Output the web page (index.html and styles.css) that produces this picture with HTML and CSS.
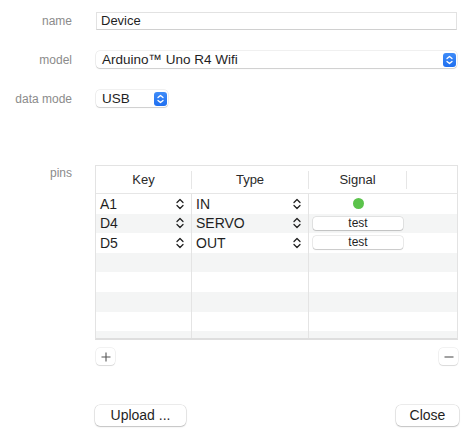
FILE: index.html
```html
<!DOCTYPE html>
<html>
<head>
<meta charset="utf-8">
<link rel="stylesheet" href="styles.css">
</head>
<body>
<div class="window">
  <div class="row row-name">
    <div class="label">name</div>
    <div class="field">Device</div>
  </div>
  <div class="row row-model">
    <div class="label">model</div>
    <div class="popup popup-wide">
      <span class="popup-text">Arduino™ Uno R4 Wifi</span>
      <span class="stepper"><svg width="7" height="10" viewBox="0 0 7 10"><path d="M1 3.6 L3.5 1.4 L6 3.6 M1 6.4 L3.5 8.6 L6 6.4" fill="none" stroke="#fff" stroke-width="1.3" stroke-linecap="round" stroke-linejoin="round"/></svg></span>
    </div>
  </div>
  <div class="row row-mode">
    <div class="label">data mode</div>
    <div class="popup popup-small">
      <span class="popup-text">USB</span>
      <span class="stepper"><svg width="7" height="10" viewBox="0 0 7 10"><path d="M1 3.6 L3.5 1.4 L6 3.6 M1 6.4 L3.5 8.6 L6 6.4" fill="none" stroke="#fff" stroke-width="1.3" stroke-linecap="round" stroke-linejoin="round"/></svg></span>
    </div>
  </div>
  <div class="row row-pins">
    <div class="label label-pins">pins</div>
    <div class="pins">
      <div class="table">
        <div class="thead">
          <div class="th c-key">Key</div>
          <div class="th c-type">Type</div>
          <div class="th c-signal">Signal</div>
          <div class="th c-extra"></div>
        </div>
        <div class="tbody">
          <div class="tr">
            <div class="td c-key"><span>A1</span><svg class="chev" width="8" height="12" viewBox="0 0 8 12"><path d="M1 4.5 L4 1.5 L7 4.5 M1 7.5 L4 10.5 L7 7.5" fill="none" stroke="#222" stroke-width="1.3" stroke-linecap="round" stroke-linejoin="round"/></svg></div>
            <div class="td c-type"><span>IN</span><svg class="chev" width="8" height="12" viewBox="0 0 8 12"><path d="M1 4.5 L4 1.5 L7 4.5 M1 7.5 L4 10.5 L7 7.5" fill="none" stroke="#222" stroke-width="1.3" stroke-linecap="round" stroke-linejoin="round"/></svg></div>
            <div class="td c-signal"><span class="dot"></span></div>
            <div class="td c-extra"></div>
          </div>
          <div class="tr alt">
            <div class="td c-key"><span>D4</span><svg class="chev" width="8" height="12" viewBox="0 0 8 12"><path d="M1 4.5 L4 1.5 L7 4.5 M1 7.5 L4 10.5 L7 7.5" fill="none" stroke="#222" stroke-width="1.3" stroke-linecap="round" stroke-linejoin="round"/></svg></div>
            <div class="td c-type"><span>SERVO</span><svg class="chev" width="8" height="12" viewBox="0 0 8 12"><path d="M1 4.5 L4 1.5 L7 4.5 M1 7.5 L4 10.5 L7 7.5" fill="none" stroke="#222" stroke-width="1.3" stroke-linecap="round" stroke-linejoin="round"/></svg></div>
            <div class="td c-signal"><span class="test">test</span></div>
            <div class="td c-extra"></div>
          </div>
          <div class="tr">
            <div class="td c-key"><span>D5</span><svg class="chev" width="8" height="12" viewBox="0 0 8 12"><path d="M1 4.5 L4 1.5 L7 4.5 M1 7.5 L4 10.5 L7 7.5" fill="none" stroke="#222" stroke-width="1.3" stroke-linecap="round" stroke-linejoin="round"/></svg></div>
            <div class="td c-type"><span>OUT</span><svg class="chev" width="8" height="12" viewBox="0 0 8 12"><path d="M1 4.5 L4 1.5 L7 4.5 M1 7.5 L4 10.5 L7 7.5" fill="none" stroke="#222" stroke-width="1.3" stroke-linecap="round" stroke-linejoin="round"/></svg></div>
            <div class="td c-signal"><span class="test">test</span></div>
            <div class="td c-extra"></div>
          </div>
          <div class="tr alt"><div class="td c-key"></div><div class="td c-type"></div><div class="td c-signal"></div><div class="td c-extra"></div></div>
          <div class="tr"><div class="td c-key"></div><div class="td c-type"></div><div class="td c-signal"></div><div class="td c-extra"></div></div>
          <div class="tr alt"><div class="td c-key"></div><div class="td c-type"></div><div class="td c-signal"></div><div class="td c-extra"></div></div>
          <div class="tr"><div class="td c-key"></div><div class="td c-type"></div><div class="td c-signal"></div><div class="td c-extra"></div></div>
          <div class="tr alt"><div class="td c-key"></div><div class="td c-type"></div><div class="td c-signal"></div><div class="td c-extra"></div></div>
        </div>
      </div>
      <div class="pm">
        <div class="sqbtn"><svg width="10" height="10" viewBox="0 0 10 10"><path d="M5 0.5 V9.5 M0.5 5 H9.5" stroke="#555" stroke-width="1.1"/></svg></div>
        <div class="sqbtn"><svg width="10" height="10" viewBox="0 0 10 10"><path d="M0.5 5 H9.5" stroke="#555" stroke-width="1.1"/></svg></div>
      </div>
    </div>
  </div>
  <div class="footer">
    <div class="btn btn-upload">Upload ...</div>
    <div class="btn btn-close">Close</div>
  </div>
</div>
</body>
</html>
```

FILE: styles.css
```css
html, body {
  margin: 0;
  padding: 0;
  background: #ffffff;
}
body {
  width: 474px;
  height: 440px;
  overflow: hidden;
  font-family: "Liberation Sans", Arial, sans-serif;
  color: #1f1f1f;
}
.window {
  padding: 12px 16px 0 0;
  box-sizing: border-box;
  height: 440px;
  display: flex;
  flex-direction: column;
}
.row {
  display: flex;
  align-items: center;
  gap: 24px;
}
.label {
  width: 72px;
  flex: none;
  text-align: right;
  font-size: 12px;
  color: #8b8b8b;
}
.row-model { margin-top: 21px; }
.row-mode { margin-top: 22px; }
.row-pins { margin-top: 58px; align-items: flex-start; gap: 23px; }
.label-pins { padding-top: 1px; }

.field {
  width: 361px;
  height: 18px;
  box-sizing: border-box;
  border: 1px solid #e2e2e2;
  border-bottom-color: #d0d0d0;
  background: #fff;
  font-size: 13px;
  line-height: 16px;
  padding-left: 4px;
}
.popup {
  height: 17px;
  box-sizing: border-box;
  background: #fff;
  border-radius: 4px;
  box-shadow: 0 0 0 0.5px rgba(0,0,0,0.12), 0 1px 1px rgba(0,0,0,0.14);
  display: flex;
  align-items: center;
  justify-content: space-between;
  padding: 0 1px 0 6px;
  font-size: 13.5px;
}
.popup-wide { width: 361px; }
.popup-small { width: 72px; }
.popup-text { line-height: 17px; }
.stepper {
  width: 13px;
  height: 14px;
  border-radius: 3px;
  background: linear-gradient(#3f8cf8, #1f6ff0);
  display: flex;
  align-items: center;
  justify-content: center;
}
.stepper svg { display: block; }

.pins {
  display: flex;
  flex-direction: column;
}
.table {
  width: 363px;
  height: 175px;
  box-sizing: border-box;
  border: 1px solid #e3e3e3;
  border-bottom: 2px solid #dedede;
  overflow: hidden;
  background: #fff;
}
.thead {
  display: flex;
  height: 28px;
  border-bottom: 1px solid #e6e6e6;
  box-sizing: border-box;
  align-items: center;
}
.th {
  font-size: 13px;
  color: #2a2a2a;
  text-align: center;
  height: 18px;
  line-height: 18px;
  box-sizing: border-box;
  border-right: 1px solid #e6e6e6;
}
.th.c-extra { border-right: none; }
.c-key { width: 96px; }
.c-type { width: 117px; }
.c-signal { width: 98px; }
.c-extra { flex: 1; }
.tbody { display: flex; flex-direction: column; }
.tr {
  display: flex;
  height: 19.6px;
  background: #fff;
}
.tr.alt { background: #f4f5f5; }
.td {
  box-sizing: border-box;
  display: flex;
  align-items: center;
  justify-content: space-between;
  font-size: 14px;
  padding: 0 7px 0 4px;
}
.tbody .c-key, .tbody .c-type { border-right: 1px solid #e4e4e4; }
.tbody .c-signal { justify-content: center; padding: 0 3px; }
.chev { display: block; flex: none; }
.dot {
  width: 11px;
  height: 11px;
  border-radius: 50%;
  background: #5bc34b;
}
.test {
  width: 90px;
  height: 13px;
  box-sizing: border-box;
  background: #fff;
  border-radius: 3px;
  box-shadow: 0 0 0 0.5px rgba(0,0,0,0.15), 0 1px 1px rgba(0,0,0,0.15);
  font-size: 12px;
  line-height: 13px;
  text-align: center;
}
.pm {
  display: flex;
  justify-content: space-between;
  margin-top: 8px;
  padding-left: 1px;
}
.sqbtn {
  width: 19px;
  height: 17px;
  box-sizing: border-box;
  background: #fff;
  border-radius: 4px;
  box-shadow: 0 0 0 0.5px rgba(0,0,0,0.1), 0 1px 1px rgba(0,0,0,0.1);
  display: flex;
  align-items: center;
  justify-content: center;
}
.sqbtn svg { display: block; }
.footer {
  display: flex;
  justify-content: space-between;
  margin-top: auto;
  margin-bottom: 14px;
  padding-left: 95px;
}
.btn {
  height: 21px;
  box-sizing: border-box;
  background: #fff;
  border-radius: 5px;
  box-shadow: 0 0 0 0.5px rgba(0,0,0,0.15), 0 1px 1.5px rgba(0,0,0,0.18);
  font-size: 14px;
  line-height: 21px;
  text-align: center;
}
.btn-upload { width: 91px; }
.btn-close { width: 63px; margin-right: -1px; }
```
